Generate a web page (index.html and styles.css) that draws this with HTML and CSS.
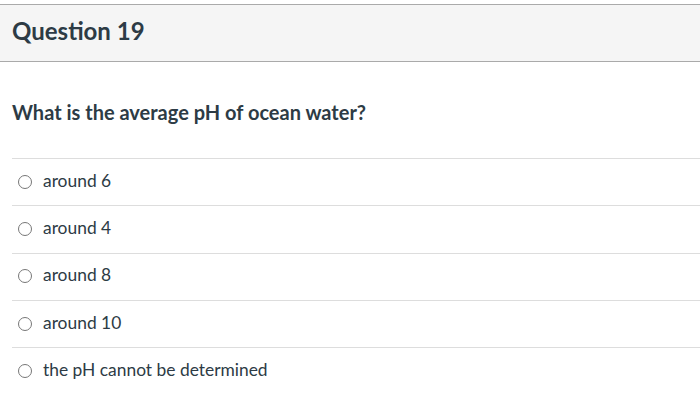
FILE: index.html
```html
<!DOCTYPE html>
<html>
<head>
<meta charset="utf-8">
<link rel="stylesheet" href="styles.css">
</head>
<body>
<div class="question">
  <div class="header"><h2 class="title">Question 19</h2></div>
  <div class="text">What is the average pH of ocean water?</div>
  <div class="answers">
    <label class="answer"><span class="radio"></span><span class="label">around 6</span></label>
    <label class="answer"><span class="radio"></span><span class="label">around 4</span></label>
    <label class="answer"><span class="radio"></span><span class="label">around 8</span></label>
    <label class="answer"><span class="radio"></span><span class="label">around 10</span></label>
    <label class="answer"><span class="radio"></span><span class="label">the pH cannot be determined</span></label>
  </div>
</div>
</body>
</html>
```
FILE: styles.css
```css
html, body {
  margin: 0;
  padding: 0;
  background: #fff;
}
body {
  font-family: Lato, "Open Sans", sans-serif;
  color: #2d3b45;
}
.question {
  padding-top: 4px;
}
.header {
  background: #f5f5f5;
  border-top: 1px solid #aaaaaa;
  border-bottom: 1px solid #aaaaaa;
  height: 56px;
  box-sizing: content-box;
  display: flex;
  align-items: center;
  padding-left: 12px;
  padding-bottom: 0;
}
.title {
  margin: 0 0 4px 0;
  font-size: 24px;
  font-weight: 700;
  line-height: 1;
}
.text {
  font-size: 20px;
  font-weight: 700;
  padding: 37px 0 0 12px;
  height: 57px;
  line-height: 26px;
  box-sizing: border-box;
}
.answers {
  margin-left: 12px;
  margin-top: 39px;
}
.answer {
  display: flex;
  align-items: center;
  border-top: 1px solid #dddddd;
  height: 47.3px;
  box-sizing: border-box;
  padding-left: 6px;
  padding-bottom: 3px;
  font-size: 17.4px;
}
.radio {
  width: 12px;
  height: 12px;
  border: 1px solid #777777;
  border-radius: 50%;
  margin-right: 11px;
  margin-top: 2px;
  flex: none;
}
.label {
  line-height: 20px;
}
```
